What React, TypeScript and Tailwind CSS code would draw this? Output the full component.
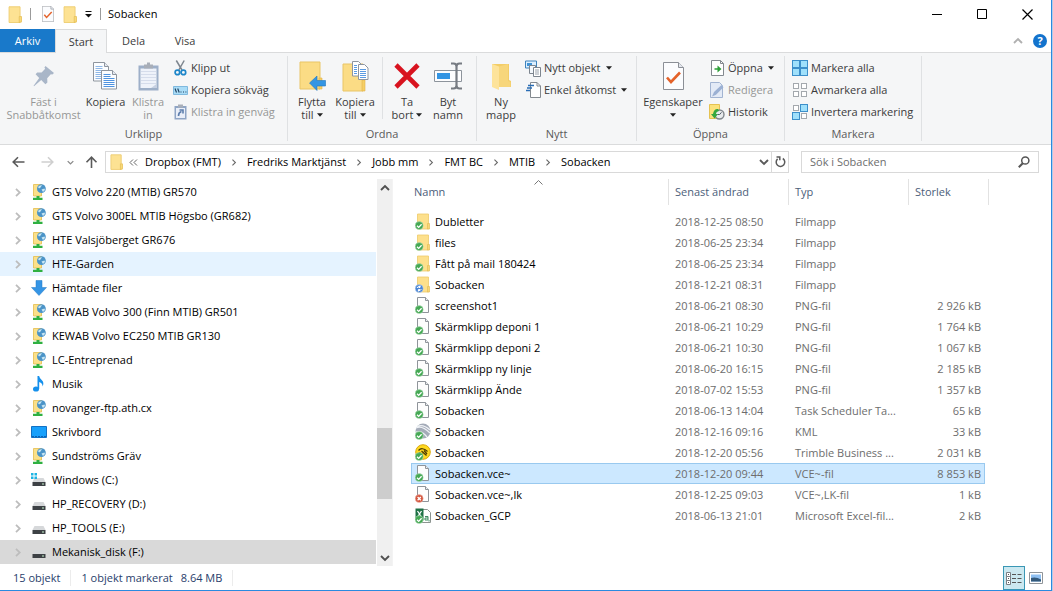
import React from "react";
import type { ReactNode } from "react";

/* ---------- shared icons ---------- */

function Caret() {
  return (
    <svg width="6" height="4" viewBox="0 0 6 4" className="shrink-0" aria-hidden="true">
      <path d="M0 0.3h6L3 3.7z" fill="#222" />
    </svg>
  );
}

function Folder({ w = 14, h = 17 }: { w?: number; h?: number }) {
  return (
    <svg width={w} height={h} viewBox="0 0 14 17" aria-hidden="true">
      <path d="M1 0.8h11.2v10H13.5v5.7H1z" fill="#f2d06b" />
      <path d="M1 0.8h11v15.7H1z" fill="#fde293" />
      <path d="M1 0.8h11v15.7H1z" fill="none" stroke="#eccb6e" strokeWidth="0.8" />
      <path d="M11.2 10.5l2.3 0v5.2l-2.3 0.8z" fill="#f9d978" stroke="#e0b84f" strokeWidth="0.6" />
    </svg>
  );
}

function CheckPage({ w, h }: { w: number; h: number }) {
  return (
    <svg width={w} height={h} viewBox="0 0 21 28" aria-hidden="true">
      <path d="M0.5 0.5h15l5 5v22H0.5z" fill="#fbfcfe" stroke="#8b8f96" />
      <path d="M15.5 0.5v5h5" fill="#e4e7ee" stroke="#8b8f96" />
      <path d="M4 15.5l4 4.5L17 10.5" fill="none" stroke="#e4632b" strokeWidth="2.6" />
    </svg>
  );
}

function Chevron({ className, weight = 1.4 }: { className?: string; weight?: number }) {
  return (
    <svg width="6" height="9" viewBox="0 0 6 9" className={className} aria-hidden="true">
      <path d="M1 0.8L4.8 4.5L1 8.2" fill="none" stroke="currentColor" strokeWidth={weight} />
    </svg>
  );
}

function Angle({ up, size = 10 }: { up?: boolean; size?: number }) {
  return (
    <svg width={size} height={size} viewBox="0 0 10 10" aria-hidden="true">
      <path d={up ? "M1 7l4-4 4 4" : "M1 3l4 4 4-4"} fill="none" stroke="currentColor" strokeWidth="1.9" />
    </svg>
  );
}

/* ---------- ribbon icons ---------- */

const PinIcon = () => (
  <svg width="22" height="22" viewBox="0 0 22 22" aria-hidden="true">
    <path d="M12.5 1L21 8l-1.6 1.6-1.6-.3-3.6 4 .2 4.2-2 1.7-4.2-4.3L1 21.2l-.4-.5 5.6-7.6L2.6 9.2l1.6-1.8 4.4.1 3.6-3.7-.8-1.4z" fill="#a9b6c8" />
  </svg>
);

const DocLines = ({ x, y, strong }: { x: number; y: number; strong?: boolean }) => (
  <g transform={`translate(${x} ${y})`}>
    <path d="M0.5 0.5h11l4 4v14.500h-15z" fill="#fbfdff" stroke="#8e959e" />
    <path d="M11.500 0.500v4h4" fill="#e5eaf2" stroke="#8e959e" />
    <path
      d="M2.500 4.500h7M2.500 6.500h7M2.500 8.500h11M2.500 10.500h11M2.500 12.500h11M2.500 14.500h11M2.500 16.500h11"
      stroke={strong ? "#4f93e0" : "#8fb7e6"}
    />
  </g>
);

const CopyIcon = () => (
  <svg width="25" height="28" viewBox="0 0 25 28" aria-hidden="true">
    <DocLines x={0} y={0} />
    <DocLines x={8} y={8} strong />
  </svg>
);

const PasteIcon = () => (
  <svg width="21" height="29" viewBox="0 0 21 29" aria-hidden="true">
    <path d="M0.500 3.500h20v25h-20z" fill="#9dafc8" />
    <path d="M2.500 6.500h16v19.500h-16z" fill="#eef2fa" />
    <path d="M3 9.500h15M3 12.500h15M3 15.500h15M3 18.500h15M3 21.500h15" stroke="#d5dceb" />
    <path d="M6 2.500h3V0.500h3v2h3v4H6z" fill="#a8aeb8" />
    <path d="M13 26l5.500-4v4z" fill="#c6d0e2" />
  </svg>
);

const CutIcon = () => (
  <svg width="13" height="16" viewBox="0 0 13 16" aria-hidden="true">
    <path d="M2.300 0.500l5.700 9.500M10.200 0.500L4.800 10" stroke="#7e868f" strokeWidth="1.500" fill="none" />
    <circle cx="3.400" cy="12.400" r="2.300" fill="none" stroke="#1d86c9" strokeWidth="1.700" />
    <circle cx="9.400" cy="12.400" r="2.300" fill="none" stroke="#1d86c9" strokeWidth="1.700" />
  </svg>
);

const PathIcon = () => (
  <svg width="15" height="9" viewBox="0 0 15 9" aria-hidden="true">
    <path d="M0.500 0.500h14v8H0.500z" fill="#a9dcf7" stroke="#7fb9de" />
    <path d="M2 2.500l1.500 4M4.700 2.500l1.500 4" stroke="#1c3d5c" strokeWidth="1.100" />
    <path d="M7.500 6h1M10 6h1M12.400 6h1" stroke="#1c3d5c" strokeWidth="1.200" />
  </svg>
);

const PasteShortcutIcon = () => (
  <svg width="13" height="16" viewBox="0 0 13 16" aria-hidden="true">
    <path d="M0.500 2h12v13.500H0.500z" fill="#8fa5c5" />
    <path d="M2 4h9v10H2z" fill="#e9eef8" />
    <path d="M4 0.500h5v3H4z" fill="#a8aeb8" />
    <path d="M4.500 12c0-3 1-4 3-4.500M5.500 6h3.500v3.500" fill="none" stroke="#5c7dac" strokeWidth="1.600" />
  </svg>
);

const MoveIcon = () => (
  <svg width="27" height="30" viewBox="0 0 27 30" aria-hidden="true">
    <path d="M1 1h20v27H1z" fill="#fbdc85" stroke="#e9c566" />
    <path d="M20 17h3v11h-3z" fill="#f6cf66" stroke="#e0b44b" strokeWidth="0.600" />
    <path d="M10.500 22l7.500-7v4.500h8.500v5.500H18v4.500z" fill="#3395e3" stroke="#2377bd" strokeWidth="0.600" />
  </svg>
);

const CopyToIcon = () => (
  <svg width="27" height="31" viewBox="0 0 27 31" aria-hidden="true">
    <path d="M1 3h20v27H1z" fill="#fbdc85" stroke="#e9c566" />
    <path d="M20 19h3v11h-3z" fill="#f6cf66" stroke="#e0b44b" strokeWidth="0.600" />
    <path d="M10.500 0.500h6l3 3v11.500h-9z" fill="#fff" stroke="#8e959e" />
    <path d="M16.500 3.500h6l3.500 3.500v11.500h-9.500z" fill="#fff" stroke="#8e959e" />
    <path d="M12 4.500h3M12 6.500h3M12 8.500h3M12 10.500h3M12 12.500h3M18 8.500h6M18 10.500h6M18 12.500h6M18 14.500h6M18 16.500h6" stroke="#5b9be2" />
  </svg>
);

const DeleteIcon = () => (
  <svg width="26" height="26" viewBox="0 0 26 26" aria-hidden="true">
    <path d="M2 2l22 22M24 2L2 24" stroke="#d8131f" strokeWidth="4.600" />
  </svg>
);

const RenameIcon = () => (
  <svg width="28" height="28" viewBox="0 0 28 28" aria-hidden="true">
    <path d="M0.500 8.500h27v11h-27z" fill="#fdfdfe" stroke="#8d949c" />
    <path d="M3 11h13v6H3z" fill="#3395e3" />
    <path d="M17 1.500h2.500q3 0 3 3v19q0 3-3 3H17M28 1.500h-2.500q-3 0-3 3v19q0 3 3 3H28" fill="none" stroke="#767b82" strokeWidth="2.200" />
  </svg>
);

const NewFolderIcon = () => (
  <svg width="20" height="28" viewBox="0 0 20 28" aria-hidden="true">
    <path d="M1 2h17v16l2 1v6H1z" fill="#f3cd67" />
    <path d="M1 2l7 2.500V28L1 25z" fill="#fde39a" />
    <path d="M8 4.500l9-2.500v17l2.500 1v5H8z" fill="#f7d67b" />
  </svg>
);

const NewItemIcon = () => (
  <svg width="16" height="17" viewBox="0 0 16 17" aria-hidden="true">
    <path d="M0.500 1h11v7H0.500z" fill="#dcefff" stroke="#3f83bb" />
    <path d="M2 3h5v3H2z" fill="#3f93d6" />
    <path d="M4.500 5.500h6v8h-6z" fill="#f4f8fc" stroke="#7d858e" />
    <path d="M8.500 7.500h7v9h-7z" fill="#fff" stroke="#7d858e" />
    <path d="M10 10h4M10 12h4M10 14h4" stroke="#9aa2ab" />
  </svg>
);

const EasyAccessIcon = () => (
  <svg width="15" height="16" viewBox="0 0 15 16" aria-hidden="true">
    <path d="M4.500 0.500h6.500l3.500 3.500v11.500h-10z" fill="#fff" stroke="#83898f" />
    <path d="M11 0.500v3.500h3.500" fill="none" stroke="#83898f" />
    <path d="M2 3.500h6M1 6h5M0 8.500h4" stroke="#2a6db5" strokeWidth="1.400" />
  </svg>
);

const OpenIcon = () => (
  <svg width="13" height="16" viewBox="0 0 13 16" aria-hidden="true">
    <path d="M0.500 0.500h9l3 3v12h-12z" fill="#fff" stroke="#83898f" />
    <path d="M9.500 0.500v3h3" fill="none" stroke="#83898f" />
    <path d="M3.500 8.200h3V5.500L10.500 9l-4 3.500V9.800h-3z" fill="#2c9f37" />
  </svg>
);

const EditIcon = () => (
  <svg width="14" height="16" viewBox="0 0 14 16" aria-hidden="true">
    <path d="M0.500 0.500h9l3 3v12h-12z" fill="#e3eaf6" stroke="#a2b4d2" />
    <path d="M2 14.500l2-4.500 7.500-7 2 2.200L6 12.800z" fill="#9bb0d3" />
  </svg>
);

const HistoryIcon = () => (
  <svg width="16" height="16" viewBox="0 0 16 16" aria-hidden="true">
    <path d="M0.500 0.500h10v14H0.500z" fill="#fbe27b" stroke="#e5c251" />
    <circle cx="10.500" cy="10.500" r="4.500" fill="#e8eaec" stroke="#80868c" strokeWidth="1.400" />
    <path d="M10.500 10.700l2-2.400M8.500 10.500h2" stroke="#55606b" fill="none" />
    <path d="M9 5q-4-.5-5 5H2l3.500 4.500L9 10H7q0-2.500 3-3z" fill="#36a83f" />
  </svg>
);

const boxes = [
  [0, 0],
  [8, 0],
  [0, 8],
  [8, 8],
];

const SelectIcon = ({ filled }: { filled: boolean[] }) => (
  <svg width="16" height="16" viewBox="0 0 16 16" aria-hidden="true">
    {boxes.map(([x, y], i) =>
      filled[i] ? (
        <rect key={i} x={x + 0.5} y={y + 0.5} width="7" height="7" fill="#9fe0fb" stroke="#3c8fca" />
      ) : (
        <rect key={i} x={x + 1.5} y={y + 1.5} width="5" height="5" fill="#fff" stroke="#a3a8ad" />
      ),
    )}
  </svg>
);

/* ---------- ribbon pieces ---------- */

function BigButton({
  icon,
  line1,
  line2,
  menu,
  disabled,
  width,
}: {
  icon: ReactNode;
  line1: string;
  line2?: string;
  menu?: boolean;
  disabled?: boolean;
  width: string;
}) {
  return (
    <button
      type="button"
      disabled={disabled}
      className={`flex shrink-0 flex-col items-center whitespace-nowrap leading-[13px] disabled:text-[#969696] ${width}`}
    >
      <span className="flex h-[38px] items-center justify-center">{icon}</span>
      <span>{line1}</span>
      <span className="flex h-[13px] items-center gap-[3px]">
        {line2}
        {menu && <Caret />}
      </span>
    </button>
  );
}

function SmallButton({ icon, label, menu, disabled }: { icon: ReactNode; label: string; menu?: boolean; disabled?: boolean }) {
  return (
    <button type="button" disabled={disabled} className="flex h-[22px] items-center gap-[3px] whitespace-nowrap disabled:text-[#969696]">
      <span className="flex w-4 items-center justify-center">{icon}</span>
      <span>{label}</span>
      {menu && (
        <span className="pl-[2px]">
          <Caret />
        </span>
      )}
    </button>
  );
}

function Group({ label, width, children }: { label: string; width: string; children: ReactNode }) {
  return (
    <section aria-label={label} className={`my-[3px] flex shrink-0 flex-col border-r border-[#dfe1e3] pt-px ${width}`}>
      <div className="flex flex-1">{children}</div>
      <div className="h-[14px] text-center leading-[14px] text-[#5a5a5a]">{label}</div>
    </section>
  );
}

/* ---------- tree ---------- */

const FtpIcon = () => (
  <svg width="14" height="16" viewBox="0 0 14 16" aria-hidden="true">
    <path d="M1.500 0.500h8v11.500h-8z" fill="#fbe08a" stroke="#e3bd4d" strokeWidth="0.800" />
    <circle cx="9.400" cy="4.700" r="4.400" fill="#4b94c8" />
    <path d="M6 3Q7.500 0.800 10 1.200L8.500 3.500 7 4.500zM9.500 5.500l3-1 .5 1.500-2 2z" fill="#c9e6f3" />
    <path d="M4.500 12h3v1.800h3V16H1v-2.200h3.500z" fill="#2fb041" />
  </svg>
);

const DownIcon = () => (
  <svg width="16" height="16" viewBox="0 0 16 16" aria-hidden="true">
    <path d="M5 0.500h6v7h4.500L8 15.500.5 7.500H5z" fill="#3595e5" stroke="#2378c4" strokeWidth="0.500" />
  </svg>
);

const MusicIcon = () => (
  <svg width="16" height="16" viewBox="0 0 16 16" aria-hidden="true">
    <ellipse cx="5" cy="13" rx="3" ry="2.600" fill="#1590ec" />
    <path d="M6.500 0h1.600q.5 2.500 2.800 4.200 2.600 2.300.6 6.300.3-3.500-3.300-4.500V13H6.500z" fill="#1590ec" />
  </svg>
);

const DesktopIcon = () => (
  <svg width="16" height="12" viewBox="0 0 16 12" aria-hidden="true">
    <path d="M0.500 0.500h15v11H0.500z" fill="#18a0fb" stroke="#1271c4" />
    <path d="M1 10.500h14" stroke="#0c62b3" strokeDasharray="2 1" />
  </svg>
);

const DriveIcon = ({ windows }: { windows?: boolean }) => (
  <svg width="16" height="16" viewBox="0 0 16 16" aria-hidden="true">
    <path d="M3.500 6h9l2 4h-13z" fill="#d6d8da" />
    <path d="M1.500 10h13v4h-13z" fill="#3d4145" />
    <path d="M11 12h2" stroke="#c8f5cf" />
    {windows && <path d="M0 1h2.500v2.500H0zM3.500 1H6v2.500H3.500zM0 4.500h2.500V7H0zM3.500 4.500H6V7H3.500z" fill="#1eb4e4" />}
  </svg>
);

type TreeItem = { label: string; icon: ReactNode; state?: "hover" | "selected" };

const tree: TreeItem[] = [
  { label: "GTS Volvo 220 (MTIB) GR570", icon: <FtpIcon /> },
  { label: "GTS Volvo 300EL MTIB Högsbo (GR682)", icon: <FtpIcon /> },
  { label: "HTE Valsjöberget GR676", icon: <FtpIcon /> },
  { label: "HTE-Garden", icon: <FtpIcon />, state: "hover" },
  { label: "Hämtade filer", icon: <DownIcon /> },
  { label: "KEWAB Volvo 300 (Finn MTIB) GR501", icon: <FtpIcon /> },
  { label: "KEWAB Volvo EC250 MTIB GR130", icon: <FtpIcon /> },
  { label: "LC-Entreprenad", icon: <FtpIcon /> },
  { label: "Musik", icon: <MusicIcon /> },
  { label: "novanger-ftp.ath.cx", icon: <FtpIcon /> },
  { label: "Skrivbord", icon: <DesktopIcon /> },
  { label: "Sundströms Gräv", icon: <FtpIcon /> },
  { label: "Windows (C:)", icon: <DriveIcon windows /> },
  { label: "HP_RECOVERY (D:)", icon: <DriveIcon /> },
  { label: "HP_TOOLS (E:)", icon: <DriveIcon /> },
  { label: "Mekanisk_disk (F:)", icon: <DriveIcon />, state: "selected" },
];

/* ---------- files ---------- */

type Kind = "folder" | "sync" | "page" | "kml" | "tbc" | "locked" | "excel";

function FileIcon({ kind }: { kind: Kind }) {
  return (
    <svg width="16" height="17" viewBox="0 0 16 17" className="shrink-0" aria-hidden="true">
      {(kind === "folder" || kind === "sync") && (
        <>
          <path d="M2.500 1h11v15h-11z" fill="#fde08c" stroke="#edca6b" strokeWidth="0.800" />
          <path d="M12.500 10.500h2v5.500h-2z" fill="#f8d676" stroke="#e0b84f" strokeWidth="0.600" />
        </>
      )}
      {(kind === "page" || kind === "locked") && (
        <>
          <path d="M2.500 0.500h8l3 3v12h-11z" fill="#fdfdfd" stroke="#8f949a" />
          <path d="M10.500 0.500v3h3" fill="#eceef1" stroke="#8f949a" />
        </>
      )}
      {kind === "kml" && (
        <>
          <circle cx="8" cy="8" r="7.500" fill="#a4abb8" />
          <path d="M1 5Q7 2 15 10M2 3.500Q8 .5 15 7M1 9q6-2 11 5" stroke="#eef1f5" strokeWidth="1.300" fill="none" />
        </>
      )}
      {kind === "tbc" && (
        <>
          <circle cx="8" cy="8" r="7.300" fill="#ffd91f" stroke="#dba90e" />
          <path d="M3.500 6.500Q7 2.500 12.500 7.500M6.500 7l5 4.500M9 6.500l3 3.500M4 8.500l4 2" stroke="#4b3a05" strokeWidth="1.200" fill="none" />
        </>
      )}
      {kind === "excel" && (
        <>
          <path d="M6.500 2.500h6l3 3v10h-9z" fill="#fff" stroke="#8c9490" />
          <path d="M0.500 1.500h8v12h-8z" fill="#1e7145" />
          <path d="M2.500 4l4 6M6.500 4l-4 6" stroke="#fff" strokeWidth="1.300" />
          <path d="M10 9.500h3v3.500h-3v-2h3M14 13v1.500" stroke="#3f8b60" fill="none" />
        </>
      )}
      {kind === "sync" ? (
        <>
          <circle cx="4.200" cy="12.600" r="4" fill="#4b86d6" stroke="#c9dcf3" strokeWidth="0.500" />
          <path d="M2 12q1-2.300 3.300-1.500M6.400 13q-1 2.300-3.300 1.500M5 9.500v2H3.500M3.400 15.500v-2h1.500" stroke="#fff" fill="none" />
        </>
      ) : kind === "locked" ? (
        <>
          <circle cx="4.200" cy="12.600" r="4" fill="#d4553d" stroke="#efc7bf" strokeWidth="0.500" />
          <path d="M2.600 11l3.200 3.200M5.800 11l-3.200 3.200" stroke="#fff" strokeWidth="1.300" />
        </>
      ) : (
        <>
          <circle cx="4.200" cy="12.600" r="4" fill="#45a854" stroke="#bfe3c5" strokeWidth="0.500" />
          <path d="M2 12.700l1.700 1.700 2.900-3.200" stroke="#fff" strokeWidth="1.300" fill="none" />
        </>
      )}
    </svg>
  );
}

const files: { name: string; date: string; type: string; size: string; kind: Kind; selected?: boolean }[] = [
  { name: "Dubletter", date: "2018-12-25 08:50", type: "Filmapp", size: "", kind: "folder" },
  { name: "files", date: "2018-06-25 23:34", type: "Filmapp", size: "", kind: "folder" },
  { name: "Fått på mail 180424", date: "2018-06-25 23:34", type: "Filmapp", size: "", kind: "folder" },
  { name: "Sobacken", date: "2018-12-21 08:31", type: "Filmapp", size: "", kind: "sync" },
  { name: "screenshot1", date: "2018-06-21 08:30", type: "PNG-fil", size: "2 926 kB", kind: "page" },
  { name: "Skärmklipp deponi 1", date: "2018-06-21 10:29", type: "PNG-fil", size: "1 764 kB", kind: "page" },
  { name: "Skärmklipp deponi 2", date: "2018-06-21 10:30", type: "PNG-fil", size: "1 067 kB", kind: "page" },
  { name: "Skärmklipp ny linje", date: "2018-06-20 16:15", type: "PNG-fil", size: "2 185 kB", kind: "page" },
  { name: "Skärmklipp Ände", date: "2018-07-02 15:53", type: "PNG-fil", size: "1 357 kB", kind: "page" },
  { name: "Sobacken", date: "2018-06-13 14:04", type: "Task Scheduler Ta...", size: "65 kB", kind: "page" },
  { name: "Sobacken", date: "2018-12-16 09:16", type: "KML", size: "33 kB", kind: "kml" },
  { name: "Sobacken", date: "2018-12-20 05:56", type: "Trimble Business ...", size: "2 031 kB", kind: "tbc" },
  { name: "Sobacken.vce~", date: "2018-12-20 09:44", type: "VCE~-fil", size: "8 853 kB", kind: "page", selected: true },
  { name: "Sobacken.vce~,lk", date: "2018-12-25 09:03", type: "VCE~,LK-fil", size: "1 kB", kind: "locked" },
  { name: "Sobacken_GCP", date: "2018-06-13 21:01", type: "Microsoft Excel-fil...", size: "2 kB", kind: "excel" },
];

const crumbs = ["Dropbox (FMT)", "Fredriks Marktjänst", "Jobb mm", "FMT BC", "MTIB", "Sobacken"];

/* ---------- page ---------- */

function TitleBar() {
  return (
    <header className="flex h-[29px] shrink-0 items-center pb-px pl-2">
      <Folder />
      <span className="ml-2 h-3 w-px bg-[#9b9b9b]" />
      <button type="button" aria-label="Egenskaper" className="ml-[11px]">
        <CheckPage w={12} h={16} />
      </button>
      <button type="button" aria-label="Ny mapp" className="ml-[9px]">
        <Folder />
      </button>
      <button type="button" aria-label="Anpassa verktygsfältet" className="ml-2">
        <svg width="7" height="7" viewBox="0 0 7 7" aria-hidden="true">
          <path d="M0.500 0.500h6" stroke="#111" />
          <path d="M0 3h7L3.500 6.500z" fill="#111" />
        </svg>
      </button>
      <span className="ml-2 h-3 w-px bg-[#9b9b9b]" />
      <h1 className="ml-[7px] text-black">Sobacken</h1>
      <div className="ml-auto flex text-black">
        <button type="button" aria-label="Minimera" className="flex h-7 w-[45px] items-center justify-center">
          <svg width="10" height="10" aria-hidden="true">
            <path d="M0 5.500h10" stroke="currentColor" />
          </svg>
        </button>
        <button type="button" aria-label="Maximera" className="flex h-7 w-[45px] items-center justify-center">
          <svg width="10" height="10" aria-hidden="true">
            <path d="M0.500 0.500h9v9h-9z" stroke="currentColor" fill="none" />
          </svg>
        </button>
        <button type="button" aria-label="Stäng" className="flex h-7 w-[47px] items-center justify-center">
          <svg width="11" height="11" aria-hidden="true">
            <path d="M0.500 0.500l10 10M10.500 0.500l-10 10" stroke="currentColor" strokeWidth="1.200" />
          </svg>
        </button>
      </div>
    </header>
  );
}

function Tabs() {
  return (
    <nav className="flex h-6 shrink-0 border-b border-[#dadbdc]" aria-label="Menyflikar">
      <button type="button" className="w-[55px] bg-[#1979ca] text-white">
        Arkiv
      </button>
      <button type="button" className="-mb-px w-[52px] border border-b-0 border-[#dadbdc] bg-[#f5f6f7]">
        Start
      </button>
      <button type="button" className="w-[53px]">
        Dela
      </button>
      <button type="button" className="w-[50px]">
        Visa
      </button>
      <div className="ml-auto flex items-center gap-[10px] pr-1 text-[#b0b0b0]">
        <button type="button" aria-label="Minimera menyfliksområdet">
          <Angle up />
        </button>
        <button type="button" aria-label="Hjälp" className="size-[14px] rounded-full bg-[#1373cd] leading-[14px] font-bold text-white">
          ?
        </button>
      </div>
    </nav>
  );
}

function Ribbon() {
  return (
    <div className="flex h-[92px] shrink-0 border-b border-[#dadbdc] bg-[#f5f6f7] text-[#3b3b3b]">
      <Group label="Urklipp" width="w-[288px]">
        <BigButton width="w-[87px]" icon={<PinIcon />} line1="Fäst i" line2="Snabbåtkomst" disabled />
        <BigButton width="w-[37px]" icon={<CopyIcon />} line1="Kopiera" />
        <BigButton width="w-[48px]" icon={<PasteIcon />} line1="Klistra" line2="in" disabled />
        <div>
          <SmallButton icon={<CutIcon />} label="Klipp ut" />
          <SmallButton icon={<PathIcon />} label="Kopiera sökväg" />
          <SmallButton icon={<PasteShortcutIcon />} label="Klistra in genväg" disabled />
        </div>
      </Group>
      <Group label="Ordna" width="w-[189px]">
        <div className="flex pl-1">
          <BigButton width="w-[40px]" icon={<MoveIcon />} line1="Flytta" line2="till" menu />
          <BigButton width="w-[46px]" icon={<CopyToIcon />} line1="Kopiera" line2="till" menu />
          <span className="mx-1 mb-2 w-px bg-[#dfe1e3]" />
          <BigButton width="w-[40px]" icon={<DeleteIcon />} line1="Ta" line2="bort" menu />
          <BigButton width="w-[42px]" icon={<RenameIcon />} line1="Byt" line2="namn" />
        </div>
      </Group>
      <Group label="Nytt" width="w-[160px]">
        <BigButton width="w-[48px]" icon={<NewFolderIcon />} line1="Ny" line2="mapp" />
        <div>
          <SmallButton icon={<NewItemIcon />} label="Nytt objekt" menu />
          <SmallButton icon={<EasyAccessIcon />} label="Enkel åtkomst" menu />
        </div>
      </Group>
      <Group label="Öppna" width="w-[148px]">
        <BigButton width="w-[72px]" icon={<CheckPage w={21} h={28} />} line1="Egenskaper" menu />
        <div>
          <SmallButton icon={<OpenIcon />} label="Öppna" menu />
          <SmallButton icon={<EditIcon />} label="Redigera" disabled />
          <SmallButton icon={<HistoryIcon />} label="Historik" />
        </div>
      </Group>
      <Group label="Markera" width="w-[137px]">
        <div className="pl-[7px]">
          <SmallButton icon={<SelectIcon filled={[true, true, true, true]} />} label="Markera alla" />
          <SmallButton icon={<SelectIcon filled={[false, false, false, false]} />} label="Avmarkera alla" />
          <SmallButton icon={<SelectIcon filled={[false, true, true, false]} />} label="Invertera markering" />
        </div>
      </Group>
    </div>
  );
}

function Arrow({ d }: { d: string }) {
  return (
    <svg width="13" height="12" viewBox="0 0 13 12" aria-hidden="true">
      <path d={d} fill="none" stroke="currentColor" strokeWidth="1.600" />
    </svg>
  );
}

function AddressBar() {
  return (
    <div className="flex h-[34px] shrink-0 items-center pr-3 pl-3 text-[#5a5a5a]">
      <button type="button" aria-label="Bakåt">
        <Arrow d="M12.500 6H1.500M6 1.200L1.200 6 6 10.800" />
      </button>
      <button type="button" aria-label="Framåt" disabled className="ml-4 text-[#cfcfcf]">
        <Arrow d="M0.500 6h11M7 1.200L11.800 6 7 10.800" />
      </button>
      <button type="button" aria-label="Senaste platser" className="ml-[13px] text-[#8a8a8a]">
        <Angle size={7} />
      </button>
      <button type="button" aria-label="Upp" className="ml-[11px]">
        <Arrow d="M6.500 12V1.500M1.500 6.200L6.500 1.200l5 5" />
      </button>
      <div className="ml-[7px] flex h-[22px] flex-1 items-center border border-[#d9d9d9] bg-white">
        <span className="ml-1">
          <Folder w={13} h={16} />
        </span>
        <span className="ml-[6px] flex">
          <svg width="9" height="7" viewBox="0 0 9 7" aria-hidden="true">
            <path d="M4 0.500L1 3.500l3 3M8 0.500L5 3.500l3 3" fill="none" stroke="#666" />
          </svg>
        </span>
        <ol className="ml-[7px] flex items-center text-black">
          {crumbs.map((c, i) => (
            <li key={c + i} className="flex items-center">
              {i > 0 && <Chevron className="mx-[10px] h-[7px] text-[#666]" />}
              <a href="#" className="whitespace-nowrap">
                {c}
              </a>
            </li>
          ))}
        </ol>
        <button type="button" aria-label="Tidigare platser" className="mr-[2px] ml-auto">
          <Angle />
        </button>
        <button type="button" aria-label="Uppdatera" className="flex h-full w-[17px] items-center justify-center border-l border-[#d9d9d9]">
          <svg width="11" height="12" viewBox="0 0 11 12" aria-hidden="true">
            <path d="M2.600 2.900A4.300 4.300 0 1 0 7.800 2.500M1.500 1h3.300v3.300" fill="none" stroke="currentColor" strokeWidth="1.500" />
          </svg>
        </button>
      </div>
      <form className="ml-3 flex h-[22px] w-[238px] items-center border border-[#d9d9d9]" role="search" onSubmit={(e) => e.preventDefault()}>
        <input
          type="text"
          aria-label="Sök i Sobacken"
          placeholder="Sök i Sobacken"
          className="min-w-0 flex-1 pl-2 outline-none placeholder:text-[#6d6d6d]"
        />
        <svg width="12" height="12" viewBox="0 0 12 12" className="mr-2" aria-hidden="true">
          <circle cx="7.300" cy="4.500" r="3.600" fill="none" stroke="#555" strokeWidth="1.500" />
          <path d="M4.800 7.200L0.800 11.200" stroke="#555" strokeWidth="2" />
        </svg>
      </form>
    </div>
  );
}

function Sidebar() {
  return (
    <aside className="flex w-[393px] shrink-0 overflow-hidden border-r border-[#f3f3f3]">
      <ul className="min-w-0 flex-1 pt-px text-black">
        {tree.map((t) => (
          <li
            key={t.label}
            className={`flex h-6 items-center pl-[15px] ${t.state === "hover" ? "bg-[#e5f3ff]" : t.state === "selected" ? "bg-[#d9d9d9]" : ""}`}
          >
            <Chevron className="text-[#bdbdbd]" weight={1.8} />
            <span className="ml-[10px] flex w-4 justify-center">{t.icon}</span>
            <span className="ml-[5px] whitespace-nowrap">{t.label}</span>
          </li>
        ))}
      </ul>
      <div className="ml-px flex w-[15px] flex-col bg-[#f0f0f0] text-[#505050]">
        <button type="button" aria-label="Rulla upp" className="flex h-[18px] items-center justify-center">
          <Angle up />
        </button>
        <div className="flex-[231]" />
        <div className="flex-[71] bg-[#cdcdcd]" />
        <div className="flex-[51]" />
        <button type="button" aria-label="Rulla ned" className="flex h-4 items-center justify-center">
          <Angle />
        </button>
      </div>
    </aside>
  );
}

function FileTable() {
  return (
    <main className="relative min-w-0 flex-1 overflow-hidden pl-[18px]">
      <svg width="9" height="5" viewBox="0 0 9 5" className="absolute top-px left-[141px]" aria-hidden="true">
        <path d="M0.500 4.500l4-4 4 4" fill="none" stroke="#777" />
      </svg>
      <table className="w-[578px] table-fixed border-separate border-spacing-0 text-[#6d6d6d]">
        <colgroup>
          <col className="w-[258px]" />
          <col className="w-[120px]" />
          <col className="w-[120px]" />
          <col className="w-[76px]" />
          <col className="w-[4px]" />
        </colgroup>
        <thead>
          <tr className="h-[26px] text-left text-[#4c607a]">
            <th className="border-r border-[#e2e2e2] pl-[3px] font-normal">Namn</th>
            <th className="border-r border-[#e2e2e2] pl-[6px] font-normal">Senast ändrad</th>
            <th className="border-r border-[#e2e2e2] pl-[6px] font-normal">Typ</th>
            <th className="pl-[6px] font-normal">Storlek</th>
            <td className="border-r border-[#e2e2e2]" />
          </tr>
        </thead>
        <tbody className="before:block before:h-[6px] before:content-['']">
          {files.map((f, i) => {
            const edge = f.selected ? "border-[#99c9ef] bg-[#cce8ff]" : "border-transparent";
            return (
              <tr key={i} className="h-[21px]">
                <td className={`border-y border-l pl-[3px] text-black ${edge}`}>
                  <div className="flex h-[19px] items-center gap-1 whitespace-nowrap">
                    <FileIcon kind={f.kind} />
                    {f.name}
                  </div>
                </td>
                <td className={`border-y pl-[6px] whitespace-nowrap ${edge}`}>{f.date}</td>
                <td className={`border-y pl-[6px] whitespace-nowrap ${edge}`}>{f.type}</td>
                <td className={`border-y border-r pr-[3px] text-right whitespace-nowrap ${edge}`}>{f.size}</td>
                <td />
              </tr>
            );
          })}
        </tbody>
      </table>
    </main>
  );
}

function StatusBar() {
  return (
    <footer className="flex h-6 shrink-0 items-center pr-2 pl-[13px] text-[#29406b]">
      <span>15 objekt</span>
      <span className="mx-[10px] h-4 w-px bg-[#ececec]" />
      <span>1 objekt markerat</span>
      <span className="ml-2">8.64 MB</span>
      <span className="ml-[10px] h-4 w-px bg-[#ececec]" />
      <div className="ml-auto flex h-full items-center gap-1">
        <button type="button" aria-label="Detaljerad information" className="flex h-full w-[22px] items-center justify-center border border-[#3a97b5] bg-[#cbe8f0]">
          <svg width="16" height="13" viewBox="0 0 16 13" aria-hidden="true">
            <path d="M0.500 0.500h4v4h-4zM0.500 4.500h4v4h-4zM0.500 8.500h4v4h-4z" fill="#fff" stroke="#7a7f85" />
            <path d="M2 2.500h1M2 6.500h1M2 10.500h1M6 2.500h4M11.500 2.500h4M6 6.500h4M11.500 6.500h4M6 10.500h4M11.500 10.500h4" stroke="#555" />
          </svg>
        </button>
        <button type="button" aria-label="Stora ikoner">
          <svg width="14" height="12" viewBox="0 0 14 12" aria-hidden="true">
            <path d="M0.500 0.500h13v11H0.500z" fill="#fff" stroke="#8f9499" />
            <path d="M2 2.500h10v7H2z" fill="#8fc0f2" />
            <path d="M2 6q5-1.500 10 1.500v2H2z" fill="#33597a" />
          </svg>
        </button>
      </div>
    </footer>
  );
}

export default function App() {
  return (
    <div className="h-screen bg-[#b5cbe6] pr-px font-['Open_Sans','Noto_Sans',sans-serif] text-[11px] leading-[16px]">
      <div className="flex h-full flex-col overflow-hidden border-r border-b border-[#2a8ae0] bg-white text-[#3b3b3b]">
        <TitleBar />
        <Tabs />
        <Ribbon />
        <AddressBar />
        <div className="flex min-h-0 flex-1">
          <Sidebar />
          <FileTable />
        </div>
        <StatusBar />
      </div>
    </div>
  );
}
